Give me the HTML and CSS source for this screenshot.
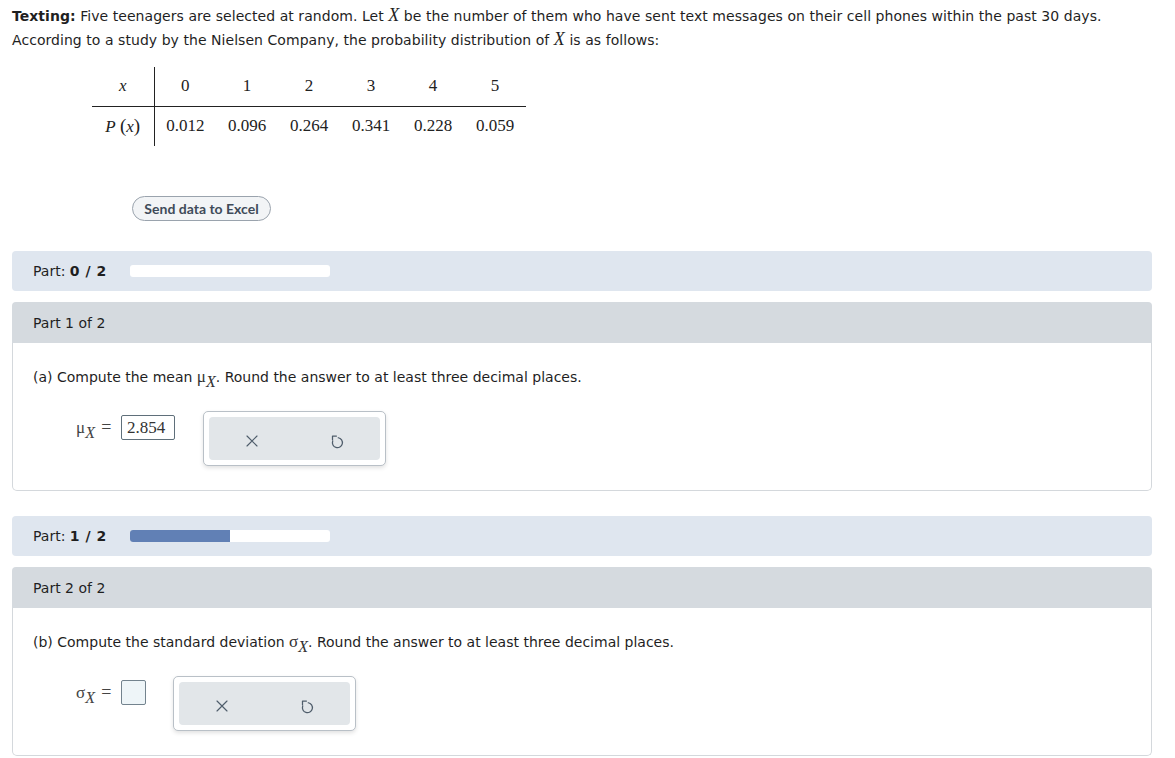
FILE: index.html
```html
<!DOCTYPE html>
<html>
<head>
<meta charset="utf-8">
<link rel="stylesheet" href="styles.css">
</head>
<body>
<div class="page">
  <p class="intro"><b>Texting:</b> Five teenagers are selected at random. Let <i class="mv">X</i> be the number of them who have sent text messages on their cell phones within the past 30 days. According to a study by the Nielsen Company, the probability distribution of <i class="mv">X</i> is as follows:</p>

  <table class="dist">
    <tr class="head">
      <td class="lab"><i>x</i></td><td>0</td><td>1</td><td>2</td><td>3</td><td>4</td><td>5</td>
    </tr>
    <tr>
      <td class="lab"><i>P</i> <span class="par">(</span><i>x</i><span class="par">)</span></td><td>0.012</td><td>0.096</td><td>0.264</td><td>0.341</td><td>0.228</td><td>0.059</td>
    </tr>
  </table>

  <div class="excel-row"><button class="excel">Send data to Excel</button></div>

  <div class="partbar">
    <span>Part: <b>0 / 2</b></span>
    <div class="progress"><div class="fill" style="width:0%"></div></div>
  </div>

  <section class="part">
    <div class="part-head">Part 1 of 2</div>
    <div class="part-body">
      <p class="q">(a) Compute the mean <span class="m">μ<sub><i>X</i></sub></span>. Round the answer to at least three decimal places.</p>
      <div class="answer-row">
        <span class="m lhs">μ<sub><i>X</i></sub> <span class="eq">=</span></span>
        <span class="inp filled">2.854</span>
        <div class="tools">
          <div class="tools-in">
            <svg class="ic" viewBox="0 0 24 24" width="20" height="20"><path d="M6 6 L18 18 M18 6 L6 18" stroke="#4f5d6b" stroke-width="1.4" fill="none" stroke-linecap="round"/></svg>
            <svg class="ic" viewBox="0 0 24 24" width="20" height="20"><path d="M13.54 8.09 A6 6 0 1 1 6.86 11.95" stroke="#4f5d6b" stroke-width="1.5" fill="none" stroke-linecap="round"/><path d="M11.3 6 H6.6 V10.6" stroke="#4f5d6b" stroke-width="1.5" fill="none" stroke-linecap="round" stroke-linejoin="round"/></svg>
          </div>
        </div>
      </div>
    </div>
  </section>

  <div class="partbar">
    <span>Part: <b>1 / 2</b></span>
    <div class="progress"><div class="fill" style="width:50%"></div></div>
  </div>

  <section class="part">
    <div class="part-head">Part 2 of 2</div>
    <div class="part-body">
      <p class="q">(b) Compute the standard deviation <span class="m">σ<sub><i>X</i></sub></span>. Round the answer to at least three decimal places.</p>
      <div class="answer-row">
        <span class="m lhs">σ<sub><i>X</i></sub> <span class="eq">=</span></span>
        <span class="inp empty"></span>
        <div class="tools">
          <div class="tools-in">
            <svg class="ic" viewBox="0 0 24 24" width="20" height="20"><path d="M6 6 L18 18 M18 6 L6 18" stroke="#4f5d6b" stroke-width="1.4" fill="none" stroke-linecap="round"/></svg>
            <svg class="ic" viewBox="0 0 24 24" width="20" height="20"><path d="M13.54 8.09 A6 6 0 1 1 6.86 11.95" stroke="#4f5d6b" stroke-width="1.5" fill="none" stroke-linecap="round"/><path d="M11.3 6 H6.6 V10.6" stroke="#4f5d6b" stroke-width="1.5" fill="none" stroke-linecap="round" stroke-linejoin="round"/></svg>
          </div>
        </div>
      </div>
    </div>
  </section>
</div>
</body>
</html>
```

FILE: styles.css
```css
* { box-sizing: border-box; }
html, body { margin: 0; padding: 0; background: #fff; }
body {
  font-family: "DejaVu Sans", Verdana, sans-serif;
  font-size: 14px;
  color: #1f1f1f;
}
.page { width: 1152px; padding: 4px 0 0 12px; }
.intro { margin: 0; line-height: 23px; letter-spacing: 0.05px; }
.mv { font-family: "Liberation Serif", serif; font-size: 18px; }

.dist {
  border-collapse: collapse;
  margin: 15px 0 0 80px;
  font-family: "Liberation Serif", serif;
  font-size: 17px;
  color: #222;
}
.dist td { width: 62px; height: 40px; text-align: center; padding: 0; }
.dist td.lab { border-right: 1px solid #222; }
.dist tr.head td { border-bottom: 1px solid #222; height: 39px; }
.par { font-size: 19px; }

.excel-row { margin: 50px 0 0 120px; height: 25px; }
.excel {
  font-family: Lato, "Open Sans", sans-serif;
  font-weight: 700;
  font-size: 14px;
  color: #3f4b59;
  background: #f2f4f6;
  border: 1px solid #9aa3ad;
  border-radius: 13px;
  height: 25px;
  width: 139px;
  padding: 0;
}

.partbar {
  margin-top: 30px;
  height: 40px;
  background: #dfe6ef;
  border-radius: 4px;
  display: flex;
  align-items: center;
  padding-left: 21px;
  gap: 23px;
}
.partbar b { letter-spacing: 0.5px; }
.progress { width: 200px; height: 12px; background: #fff; border-radius: 3px; overflow: hidden; }
.fill { height: 100%; background: #6180b5; }

.part { margin-top: 11px; }
.part + .partbar { margin-top: 25px; }
.part-head {
  height: 41px;
  background: #d5dadf;
  border-radius: 4px 4px 0 0;
  padding-left: 21px;
  display: flex;
  align-items: center;
}
.part-body {
  border: 1px solid #d4d8dc;
  border-top: none;
  border-radius: 0 0 5px 5px;
  padding: 24px 20px 24px 20px;
}
.q { margin: 0; line-height: 20px; }
.m { font-family: "Liberation Serif", serif; font-size: 17px; color: #333; }
.m sub { font-size: 16px; vertical-align: -5px; line-height: 0; }
.eq { font-size: 18px; margin-left: 2px; }

.answer-row { display: flex; align-items: flex-start; margin-top: 24px; }
.lhs { margin: 6px 0 0 43px; width: 45px; color: #444; white-space: nowrap; }
.inp {
  display: inline-block;
  height: 25px;
  border: 1px solid #5f6f7a;
  border-radius: 2px;
  margin-top: 4px;
  font-family: "Liberation Serif", serif;
  font-size: 17px;
  color: #333;
  line-height: 23px;
}
.inp.filled { width: 54px; padding-left: 5px; }
.inp.empty { width: 25px; background: #eef5f8; border-color: #73838e; }
.tools {
  width: 183px;
  height: 55px;
  border: 1px solid #b9c0c7;
  border-radius: 5px;
  padding: 5px;
  margin-left: 28px;
  box-shadow: 0 2px 4px rgba(0,0,0,0.12);
  background: #fff;
}
.inp.empty + .tools { margin-left: 27px; }
.tools-in {
  height: 100%;
  background: #e2e6e9;
  border-radius: 4px;
  display: flex;
  align-items: center;
  justify-content: space-around;
  padding-top: 4px;
}
.ic { display: block; }
```
